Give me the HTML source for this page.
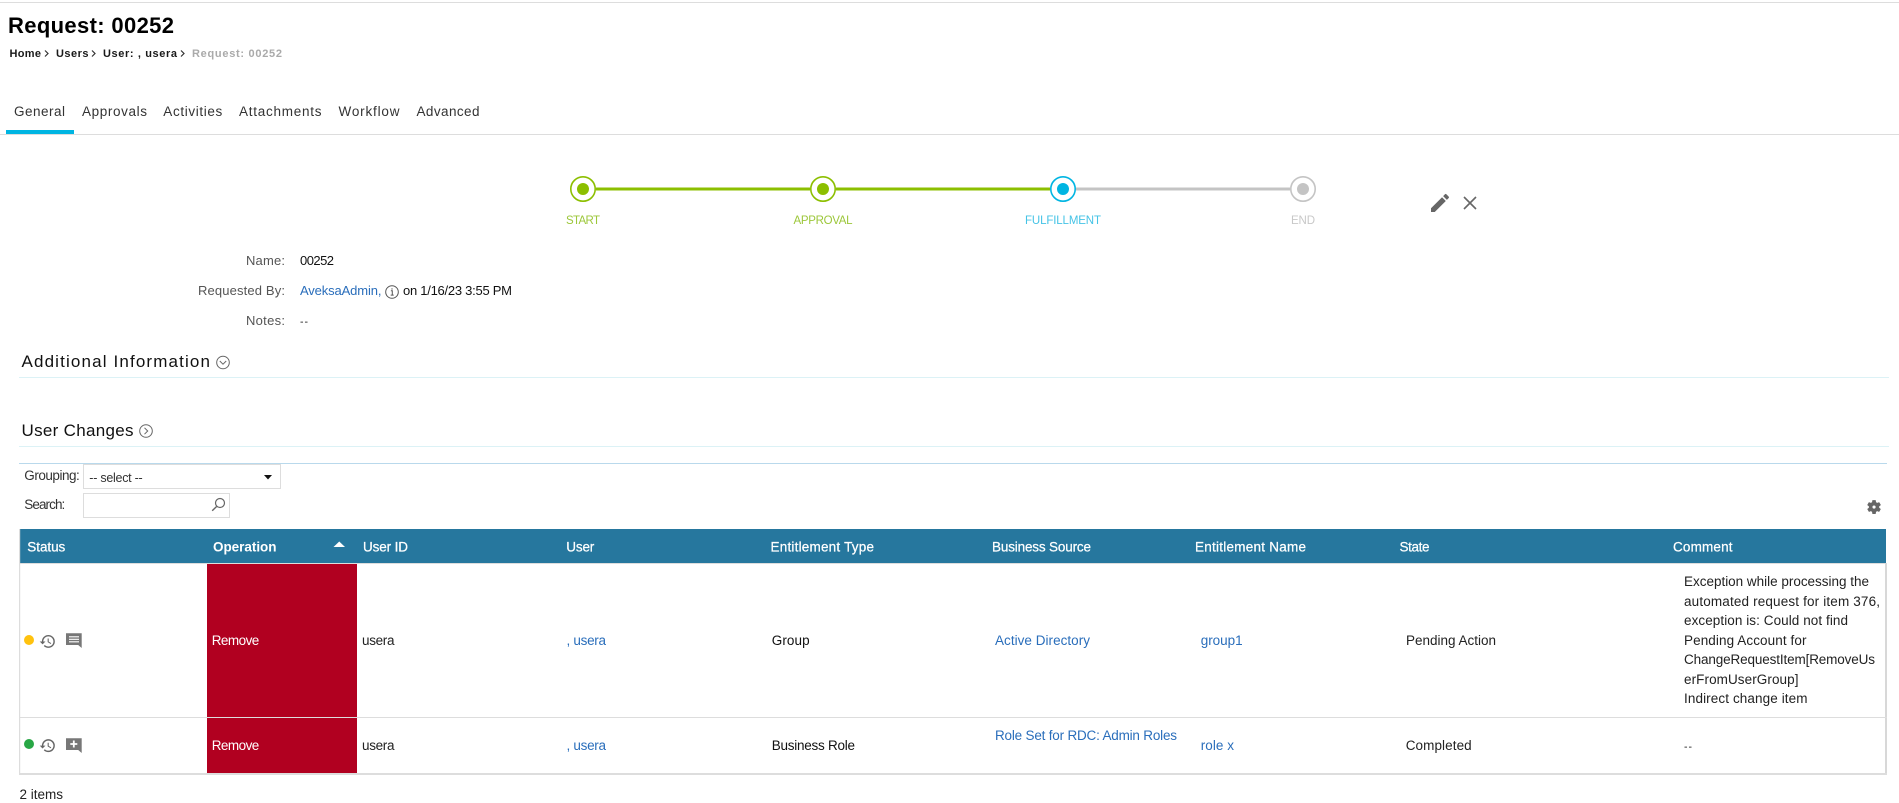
<!DOCTYPE html>
<html lang="en">
<head>
<meta charset="utf-8">
<title>Request: 00252</title>
<style>
html,body{margin:0;padding:0;background:#fff;overflow:hidden}
svg{display:block}
text{font-family:"Liberation Sans",Arial,sans-serif;font-size:13.5px;fill:#222;white-space:pre}
.t{font-size:13.5px;fill:#333}
.lab{fill:#555;font-size:13px}
.val{fill:#111;font-size:13px}
.a{fill:#2a6ebb}
.h{fill:#fff;stroke:#fff;stroke-width:.25px;font-size:13.5px}
.crumb{font-size:11px;font-weight:700;fill:#1a1a1a}
.sec{font-size:17px;fill:#111}
.step{font-size:11.5px}
.dash{font-size:10.5px;fill:#111}
</style>
</head>
<body>
<svg xmlns="http://www.w3.org/2000/svg" width="1899" height="803" viewBox="0 0 1899 803">
<rect width="1899" height="803" fill="#fff"/>
<rect x="0" y="2" width="1899" height="1" fill="#ddd"/>

<!-- Title and breadcrumbs -->
<text x="8" y="33" textLength="166" style="font-size:22px;font-weight:700;fill:#000">Request: 00252</text>
<text class="crumb" x="9.5" y="57" textLength="31.5">Home</text>
<path d="M45 50.5l3 3-3 3" fill="none" stroke="#333" stroke-width="1.2"/>
<text class="crumb" x="56" y="57" textLength="32.5">Users</text>
<path d="M92 50.5l3 3-3 3" fill="none" stroke="#333" stroke-width="1.2"/>
<text class="crumb" x="103" y="57" textLength="74">User: , usera</text>
<path d="M181 50.5l3 3-3 3" fill="none" stroke="#333" stroke-width="1.2"/>
<text class="crumb" x="192" y="57" textLength="90" style="fill:#aaa">Request: 00252</text>

<!-- Tabs -->
<text class="t" x="14" y="116" textLength="51">General</text>
<text class="t" x="82" y="116" textLength="65">Approvals</text>
<text class="t" x="163.3" y="116" textLength="59">Activities</text>
<text class="t" x="239" y="116" textLength="82.5">Attachments</text>
<text class="t" x="338.5" y="116" textLength="61">Workflow</text>
<text class="t" x="416.5" y="116" textLength="63">Advanced</text>
<rect x="0" y="134" width="1899" height="1" fill="#ddd"/>
<rect x="6" y="130" width="68" height="4" fill="#00b5e2"/>

<!-- Stepper -->
<rect x="596" y="187.5" width="214" height="3" fill="#8cbf00"/>
<rect x="836" y="187.5" width="214" height="3" fill="#8cbf00"/>
<rect x="1076" y="187.5" width="214" height="3" fill="#c4c4c4"/>
<circle cx="583" cy="189" r="12.2" fill="#fff" stroke="#8cbf00" stroke-width="1.6"/><circle cx="583" cy="189" r="6" fill="#8cbf00"/>
<circle cx="823" cy="189" r="12.2" fill="#fff" stroke="#8cbf00" stroke-width="1.6"/><circle cx="823" cy="189" r="6" fill="#8cbf00"/>
<circle cx="1063" cy="189" r="12.2" fill="#fff" stroke="#00b5e2" stroke-width="1.6"/><circle cx="1063" cy="189" r="6" fill="#00b5e2"/>
<circle cx="1303" cy="189" r="12.2" fill="#fff" stroke="#c4c4c4" stroke-width="1.6"/><circle cx="1303" cy="189" r="6" fill="#c4c4c4"/>
<text class="step" x="566" y="224" textLength="34" style="fill:#9cc73a">START</text>
<text class="step" x="793.5" y="224" textLength="59" style="fill:#9cc73a">APPROVAL</text>
<text class="step" x="1025" y="224" textLength="76" style="fill:#45c3e6">FULFILLMENT</text>
<text class="step" x="1291" y="224" textLength="24" style="fill:#c8c8c8">END</text>
<g transform="translate(1428 191)"><path fill="#666" d="M3 17.25V21h3.75L17.81 9.94l-3.75-3.75L3 17.25zM20.71 7.04a.996.996 0 0 0 0-1.41l-2.34-2.34a.996.996 0 0 0-1.41 0l-1.83 1.83 3.75 3.75 1.83-1.83z"/></g>
<path d="M1464 197l12 12M1476 197l-12 12" stroke="#666" stroke-width="1.6" fill="none"/>

<!-- Details -->
<text class="lab" x="246" y="265" textLength="39">Name:</text>
<text class="val" x="300" y="265" textLength="34">00252</text>
<text class="lab" x="198" y="295" textLength="87">Requested By:</text>
<text class="val a" x="300" y="295" textLength="81.5" style="fill:#2a6ebb">AveksaAdmin,</text>
<circle cx="392" cy="292" r="6.3" fill="none" stroke="#555" stroke-width="1"/>
<path d="M392 288.3v1.3M390.9 290.8h1.4v4.2M390.7 295.1h3" stroke="#555" stroke-width="1" fill="none"/>
<text class="val" x="403" y="295" textLength="109">on 1/16/23 3:55 PM</text>
<text class="lab" x="246" y="325" textLength="39">Notes:</text>
<text class="dash" x="300" y="325" textLength="8">--</text>

<!-- Additional Information -->
<text class="sec" x="21.5" y="367" textLength="188.5">Additional Information</text>
<circle cx="223" cy="362.5" r="6.3" fill="none" stroke="#666" stroke-width="1"/>
<path d="M219.8 361l3.2 3.2 3.2-3.2" fill="none" stroke="#666" stroke-width="1"/>
<rect x="19" y="377" width="1870" height="1" fill="#dcf2f6"/>

<!-- User Changes -->
<text class="sec" x="21.5" y="436" textLength="112">User Changes</text>
<circle cx="146" cy="431" r="6.3" fill="none" stroke="#666" stroke-width="1"/>
<path d="M144.5 427.8l3.2 3.2-3.2 3.2" fill="none" stroke="#666" stroke-width="1"/>
<rect x="19" y="446" width="1870" height="1" fill="#dcf2f6"/>
<rect x="19" y="463" width="1868" height="1" fill="#b9d9ec"/>

<!-- Filters -->
<text class="t" x="24.3" y="480" textLength="55.5">Grouping:</text>
<rect x="83.5" y="464.5" width="197" height="24" fill="#fff" stroke="#ddd"/>
<text class="t" x="89.3" y="482" textLength="53.4" style="font-size:12.5px">-- select --</text>
<path d="M264 475h8l-4 4.5z" fill="#111"/>
<text class="t" x="24.3" y="509" textLength="41">Search:</text>
<rect x="83.5" y="493.5" width="146" height="24" fill="#fff" stroke="#ddd"/>
<circle cx="220" cy="503" r="4.5" fill="none" stroke="#666" stroke-width="1.2"/>
<path d="M216.6 506.5l-4.4 4.2" stroke="#666" stroke-width="1.4" fill="none"/>
<g transform="translate(1865.4 498.4) scale(.72)"><path fill="#666" d="M19.14 12.94c.04-.3.06-.61.06-.94 0-.32-.02-.64-.07-.94l2.03-1.58a.49.49 0 0 0 .12-.61l-1.92-3.32a.488.488 0 0 0-.59-.22l-2.39.96c-.5-.38-1.03-.7-1.62-.94l-.36-2.54a.484.484 0 0 0-.48-.41h-3.84c-.24 0-.43.17-.47.41l-.36 2.54c-.59.24-1.13.57-1.62.94l-2.39-.96c-.22-.08-.47 0-.59.22L2.74 8.87c-.12.21-.08.47.12.61l2.03 1.58c-.05.3-.09.63-.09.94s.02.64.07.94l-2.03 1.58a.49.49 0 0 0-.12.61l1.92 3.32c.12.22.37.29.59.22l2.39-.96c.5.38 1.03.7 1.62.94l.36 2.54c.05.24.24.41.48.41h3.84c.24 0 .44-.17.47-.41l.36-2.54c.59-.24 1.13-.56 1.62-.94l2.39.96c.22.08.47 0 .59-.22l1.92-3.32c.12-.22.07-.47-.12-.61l-2.01-1.58z"/><circle cx="12" cy="12" r="2.2" fill="#fff"/></g>

<!-- Table header -->
<rect x="20" y="529" width="1866" height="34" fill="#26779e"/>
<rect x="20" y="563" width="1866" height="1" fill="#ddd"/>
<text class="h" x="27.3" y="551.5" textLength="38">Status</text>
<text class="h" x="213" y="551.5" textLength="63.5" style="font-weight:700;stroke-width:0">Operation</text>
<path d="M333.5 547h11.5l-5.75-5.5z" fill="#fff"/>
<text class="h" x="363" y="551.5" textLength="45">User ID</text>
<text class="h" x="566.3" y="551.5" textLength="28">User</text>
<text class="h" x="770.5" y="551.5" textLength="103.5">Entitlement Type</text>
<text class="h" x="992" y="551.5" textLength="99">Business Source</text>
<text class="h" x="1195" y="551.5" textLength="111">Entitlement Name</text>
<text class="h" x="1399.5" y="551.5" textLength="30">State</text>
<text class="h" x="1673" y="551.5" textLength="59.5">Comment</text>

<!-- Table frame and rows -->
<rect x="19" y="529" width="1.2" height="246" fill="#ddd"/>
<rect x="1885" y="563" width="2" height="212" fill="#d8d8d8"/>
<rect x="19" y="717" width="1868" height="1" fill="#ddd"/>
<rect x="19" y="773" width="1868" height="2" fill="#ddd"/>
<rect x="207" y="564" width="150" height="153" fill="#b10020"/>
<rect x="207" y="718" width="150" height="55" fill="#b10020"/>

<!-- Row 1 -->
<circle cx="29" cy="640" r="5" fill="#ffc20e"/>
<g transform="translate(39 632.8) scale(.72)"><path fill="#666" d="M13 3a9 9 0 0 0-9 9H1l3.89 3.89.07.14L9 12H6c0-3.87 3.13-7 7-7s7 3.13 7 7-3.13 7-7 7c-1.93 0-3.68-.79-4.94-2.06l-1.42 1.42A8.954 8.954 0 0 0 13 21a9 9 0 0 0 0-18zm-1 5v5l4.28 2.54.72-1.21-3.5-2.08V8H12z"/></g>
<path d="M66 633.3h15.7v14.7l-3.5-3H66z" fill="#777"/>
<path d="M69 636.8h10M69 639.3h10M69 641.8h10" stroke="#fff" stroke-width="1.1" fill="none"/>
<text x="211.7" y="645" textLength="47.6" style="fill:#fff">Remove</text>
<text x="362" y="645" textLength="32.5">usera</text>
<text class="a" x="566.5" y="645" textLength="39.5">, usera</text>
<text x="771.7" y="645" textLength="38" style="fill:#111">Group</text>
<text class="a" x="995" y="645" textLength="95">Active Directory</text>
<text class="a" x="1200.7" y="645" textLength="42">group1</text>
<text x="1406" y="645" textLength="90">Pending Action</text>
<text x="1684" y="586" textLength="185">Exception while processing the</text>
<text x="1684" y="606" textLength="196">automated request for item 376,</text>
<text x="1684" y="625" textLength="164">exception is: Could not find</text>
<text x="1684" y="645" textLength="122.5">Pending Account for</text>
<text x="1684" y="664" textLength="191">ChangeRequestItem[RemoveUs</text>
<text x="1684" y="684" textLength="114.5">erFromUserGroup]</text>
<text x="1684" y="703" textLength="123.5">Indirect change item</text>

<!-- Row 2 -->
<circle cx="29" cy="744" r="5" fill="#28a745"/>
<g transform="translate(39 737) scale(.72)"><path fill="#666" d="M13 3a9 9 0 0 0-9 9H1l3.89 3.89.07.14L9 12H6c0-3.87 3.13-7 7-7s7 3.13 7 7-3.13 7-7 7c-1.93 0-3.68-.79-4.94-2.06l-1.42 1.42A8.954 8.954 0 0 0 13 21a9 9 0 0 0 0-18zm-1 5v5l4.28 2.54.72-1.21-3.5-2.08V8H12z"/></g>
<path d="M66 738.3h15.7v14.7l-3.5-3H66z" fill="#777"/>
<path d="M73.8 740.5v7M70.3 744h7" stroke="#fff" stroke-width="1.8" fill="none"/>
<text x="211.7" y="750" textLength="47.6" style="fill:#fff">Remove</text>
<text x="362" y="750" textLength="32.5">usera</text>
<text class="a" x="566.5" y="750" textLength="39.5">, usera</text>
<text x="771.7" y="750" textLength="83.3" style="fill:#111">Business Role</text>
<text class="a" x="995" y="740" textLength="182">Role Set for RDC: Admin Roles</text>
<text class="a" x="1200.7" y="750" textLength="33.3">role x</text>
<text x="1405.7" y="750" textLength="66">Completed</text>
<text class="dash" x="1684" y="750" textLength="8">--</text>

<text x="19.5" y="799" textLength="43.5">2 items</text>
</svg>
</body>
</html>
